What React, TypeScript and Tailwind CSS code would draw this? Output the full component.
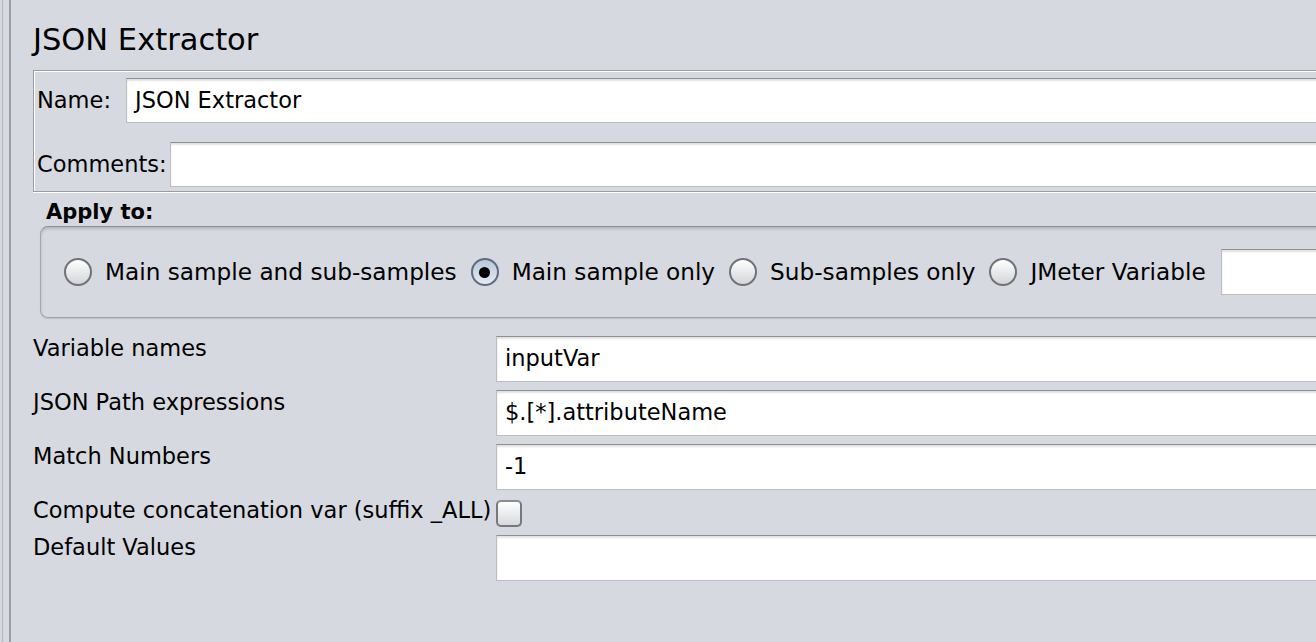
import React from "react";

const font = { fontFamily: '"DejaVu Sans", "Lucida Grande", Verdana, sans-serif' };

function TextBox({ value = "", className = "" }: { value?: string; className?: string }) {
  return (
    <div
      className={
        "flex h-[46px] flex-1 items-center border border-[#bcbdc0] border-t-[#8e8f93] border-r-0 bg-white pl-[8px] text-[22.5px] text-black shadow-[inset_0_2px_2px_rgba(0,0,0,0.12)] " +
        className
      }
    >
      {value}
    </div>
  );
}

function Radio({ checked, label }: { checked?: boolean; label: string }) {
  return (
    <div className="flex items-center gap-[13px]">
      <div
        className={
          "flex h-[28px] w-[28px] items-center justify-center rounded-full border-2 " +
          (checked
            ? "border-[#5d6c7e] bg-gradient-to-b from-[#b9c8da] to-[#e4ebf3]"
            : "border-[#6f7277] bg-gradient-to-b from-[#ffffff] to-[#d3d5d9]")
        }
      >
        {checked && <div className="h-[11px] w-[11px] rounded-full bg-black" />}
      </div>
      <span className="whitespace-nowrap text-[23.2px] leading-none">{label}</span>
    </div>
  );
}

function FieldRow({ label, value }: { label: string; value?: string }) {
  return (
    <div className="flex items-start">
      <div className="w-[463px] shrink-0 text-[22.5px] leading-[24px]">{label}</div>
      <TextBox value={value} />
    </div>
  );
}

export default function App() {
  return (
    <div className="flex h-[642px] w-[1316px] overflow-hidden bg-[#d6d9df] text-black" style={font}>
      {/* left split-pane edge */}
      <div className="flex shrink-0 pl-[2px]">
        <div className="w-px bg-[#b3b6bb]" />
        <div className="ml-[6px] w-[2px] bg-[#9c9fa4]" />
      </div>

      <div className="flex w-[1340px] shrink-0 flex-col pl-[22px]">
        <h1 className="pt-[21px] text-[30.5px] leading-[38px]">JSON Extractor</h1>

        {/* name / comments panel */}
        <div className="mt-[11px] flex flex-col gap-[19px] border border-[#9a9ca0] border-r-0 px-[3px] pt-[7px] pb-[4px] shadow-[inset_1px_1px_0_#ffffff,0_1px_0_#ffffff]">
          <div className="flex items-center">
            <span className="w-[89px] shrink-0 text-[22.5px]">Name:</span>
            <TextBox value="JSON Extractor" className="!h-[45px]" />
          </div>
          <div className="flex items-center">
            <span className="w-[133px] shrink-0 text-[22.5px]">Comments:</span>
            <TextBox className="!h-[45px]" />
          </div>
        </div>

        {/* apply to */}
        <div className="mt-[8px] pl-[13px] text-[21px] font-bold leading-[25px]">Apply to:</div>
        <div className="ml-[7px] mt-[1px] flex h-[92px] items-center gap-[14px] rounded-l-[8px] border border-[#a2a5aa] border-t-[#8d9095] border-r-0 pl-[23px] shadow-[inset_0_2px_3px_rgba(0,0,0,0.16),0_1px_1px_rgba(0,0,0,0.12)]">
          <Radio label="Main sample and sub-samples" />
          <Radio checked label="Main sample only" />
          <Radio label="Sub-samples only" />
          <Radio label="JMeter Variable" />
          <TextBox className="ml-[1px]" />
        </div>

        {/* fields */}
        <div className="mt-[18px] flex flex-col gap-[8px]">
          <FieldRow label="Variable names" value="inputVar" />
          <FieldRow label="JSON Path expressions" value="$.[*].attributeName" />
          <FieldRow label="Match Numbers" value="-1" />
          <div className="flex h-[29px] items-start">
            <div className="w-[463px] shrink-0 whitespace-nowrap text-[22.5px] leading-[24px]">
              Compute concatenation var (suffix _ALL)
            </div>
            <div className="mt-[2px] h-[27px] w-[26px] rounded-[5px] border-2 border-[#75787d] border-t-[#8a8d92] bg-gradient-to-b from-[#ffffff] to-[#d7d9dd]" />
          </div>
          <FieldRow label="Default Values" />
        </div>
      </div>
    </div>
  );
}
